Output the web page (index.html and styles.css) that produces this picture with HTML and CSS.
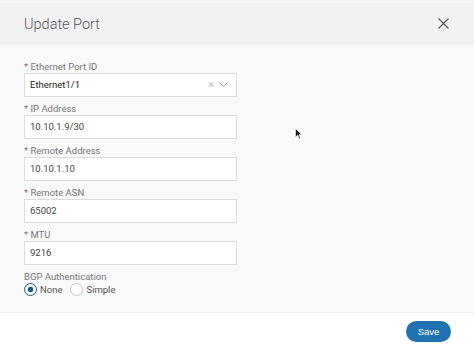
FILE: index.html
```html
<!DOCTYPE html>
<html lang="en">
<head>
    <meta charset="UTF-8">
    <meta name="viewport" content="width=device-width, initial-scale=1.0">
    <title>Update Port</title>
    <link rel="stylesheet" href="styles.css">
</head>
<body>
    <div class="modal">
        <!-- Header -->
        <header class="modal-header">
            <h1>Update Port</h1>
            <button class="close" type="button" aria-label="Close">
                <svg width="11" height="11" viewBox="0 0 11 11">
                    <path d="M0.5 0.5 L10.5 10.5 M10.5 0.5 L0.5 10.5" stroke="#555" stroke-width="1.2" fill="none"/>
                </svg>
            </button>
        </header>

        <!-- Form -->
        <form class="modal-body">
            <div class="field">
                <label>* Ethernet Port ID</label>
                <div class="select">
                    <span class="value">Ethernet1/1</span>
                    <span class="clear">&times;</span>
                    <svg class="chevron" width="9" height="5" viewBox="0 0 9 5">
                        <path d="M0.5 0.5 L4.5 4.5 L8.5 0.5" stroke="#999" stroke-width="1" fill="none"/>
                    </svg>
                </div>
            </div>
            <div class="field">
                <label>* IP Address</label>
                <div class="input">10.10.1.9/30</div>
            </div>
            <div class="field">
                <label>* Remote Address</label>
                <div class="input">10.10.1.10</div>
            </div>
            <div class="field">
                <label>* Remote ASN</label>
                <div class="input">65002</div>
            </div>
            <div class="field">
                <label>* MTU</label>
                <div class="input">9216</div>
            </div>
            <div class="field">
                <label>BGP Authentication</label>
                <div class="radios">
                    <span class="radio checked"><span class="dot"></span>None</span>
                    <span class="radio"><span class="dot"></span>Simple</span>
                </div>
            </div>
        </form>

        <!-- Footer -->
        <footer class="modal-footer">
            <button class="btn" type="button">Save</button>
        </footer>

        <!-- mouse pointer -->
        <svg class="cursor" width="8" height="12" viewBox="0 0 8 12">
            <path d="M0.5 0.5 L0.5 9 L2.6 7.2 L4.2 10.8 L5.4 10.3 L3.9 6.8 L6.8 6.8 Z" fill="#111" stroke="#fff" stroke-width="0.6"/>
        </svg>
    </div>
</body>
</html>
```

FILE: styles.css
```css
/* General Styling */
body {
    margin: 0;
    padding: 0;
    font-family: Roboto, "Liberation Sans", sans-serif;
    background: #ffffff;
    color: #333;
}

.modal {
    position: relative;
    width: 474px;
    height: 348px;
    display: flex;
    flex-direction: column;
}

/* Header */
.modal-header {
    height: 47px;
    background: #f2f2f4;
    display: flex;
    align-items: center;
    justify-content: space-between;
    padding: 0 25px 0 24px;
    box-sizing: border-box;
    border-top: 3px solid #f7f7f8;
}

.modal-header h1 {
    margin: 0;
    font-size: 14.5px;
    font-weight: 300;
    color: #555;
    padding-top: 1px;
}

.close {
    border: none;
    background: none;
    padding: 0;
    display: flex;
}

/* Body */
.modal-body {
    background: #f9f9fa;
    padding: 16px 24px 16px;
    flex: 1;
    display: flex;
    flex-direction: column;
    gap: 6px;
}

.field label {
    display: block;
    font-size: 9.5px;
    line-height: 12px;
    color: #777;
}

.input,
.select {
    width: 213px;
    height: 24px;
    box-sizing: border-box;
    background: #fff;
    border: 1px solid #dcdcdc;
    padding: 0 5px;
    font-size: 9.5px;
    color: #444;
    display: flex;
    align-items: center;
}

.select .value {
    flex: 1;
    color: #222;
}

.select .clear {
    color: #bbb;
    font-size: 11px;
    margin-right: 5px;
}

.select .chevron {
    margin-right: 3px;
}

/* Radio buttons */
.radios {
    display: flex;
    gap: 8px;
    height: 12px;
    align-items: center;
    margin-top: 1px;
}

.radio {
    display: flex;
    align-items: center;
    gap: 3px;
    font-size: 9.5px;
    color: #555;
}

.radio .dot {
    width: 13px;
    height: 13px;
    box-sizing: border-box;
    border-radius: 50%;
    border: 1px solid #c8c8c8;
    background: #fff;
}

.radio.checked .dot {
    border: 1.5px solid #1d5a88;
    background: radial-gradient(circle, #1d5a88 0 2.6px, #fff 3px);
}

/* Footer */
.modal-footer {
    height: 38px;
    border-top: 1px solid #efefef;
    display: flex;
    justify-content: flex-end;
    align-items: center;
    padding-right: 23px;
    box-sizing: border-box;
}

.btn {
    width: 45px;
    height: 21px;
    border: none;
    border-radius: 11px;
    background: #1f72b0;
    color: #fff;
    font-family: "Liberation Sans", sans-serif;
    font-size: 9.5px;
    padding: 0;
    margin-top: 2px;
}

.cursor {
    position: absolute;
    left: 295px;
    top: 128px;
}
```
